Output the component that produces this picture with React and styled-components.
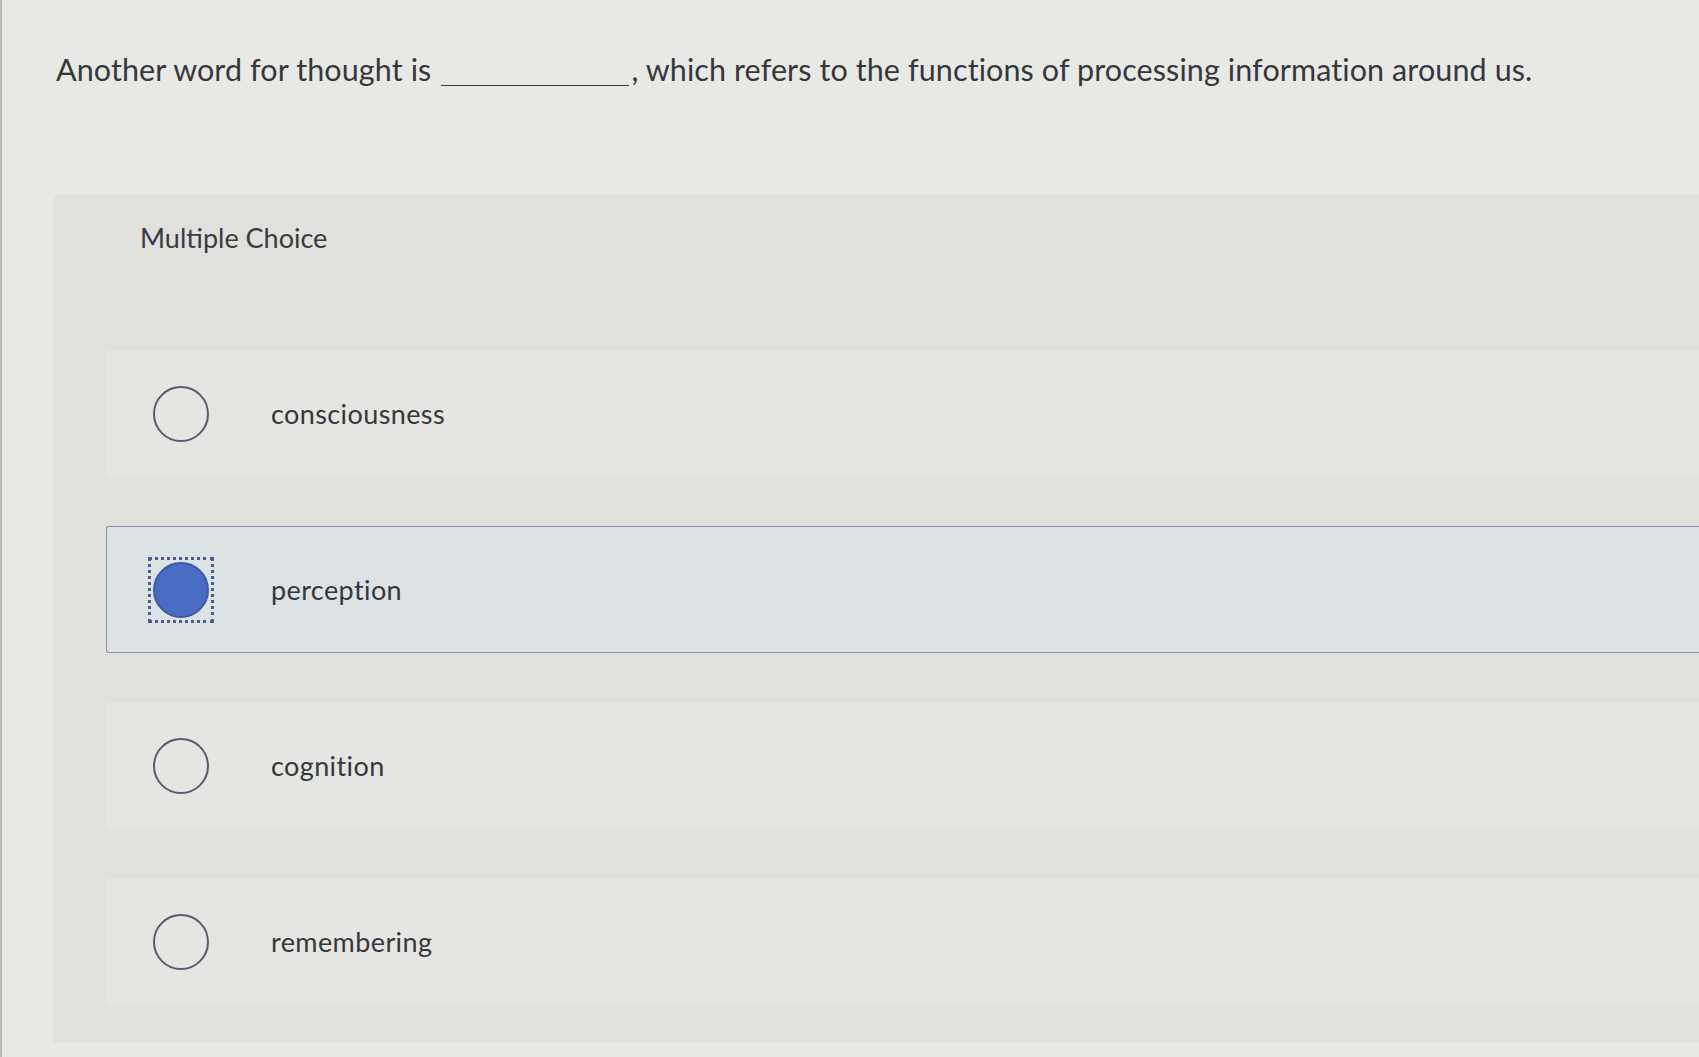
import React from 'react';
import styled, { createGlobalStyle } from 'styled-components';

const GlobalStyle = createGlobalStyle`
  html, body {
    margin: 0;
    padding: 0;
    background: #e8e8e5;
    overflow: hidden;
  }
  body {
    font-family: Lato, "Open Sans", "Liberation Sans", sans-serif;
    color: #36373c;
  }
`;

const Page = styled.div`
  min-height: 1057px;
  padding: 48px 0 0 52px;
  box-sizing: border-box;
  border-left: 2px solid #b9b9b6;
`;

const Question = styled.p`
  margin: 0 0 0 2px;
  font-size: 30.5px;
  line-height: 42px;
  letter-spacing: 0.1px;
  color: #36373c;
`;

const Blank = styled.span`
  display: inline-block;
  width: 188px;
  margin: 0 2px 0 10px;
  border-bottom: 1.5px solid #3a3b40;
  vertical-align: -5px;
`;

const Panel = styled.section`
  margin: 104px -40px 0 0;
  padding: 26px 0 38px 52px;
  background: #e0e0dd;
`;

const PanelTitle = styled.h2`
  margin: 0 0 94px 34px;
  font-size: 27px;
  font-weight: 400;
  line-height: 36px;
  color: #3a3b40;
`;

const Options = styled.div`
  display: flex;
  flex-direction: column;
  gap: 49px;
`;

const Option = styled.label`
  display: flex;
  align-items: center;
  gap: 57px;
  height: 127px;
  padding-left: 41px;
  box-sizing: border-box;
  background: ${(p) => (p.selected ? '#dde2e5' : '#e5e5e2')};
  border: 1.5px solid ${(p) => (p.selected ? '#8891b3' : 'transparent')};
  border-right: none;
  border-radius: 3px 0 0 3px;
  cursor: pointer;
`;

const Focus = styled.span`
  flex: none;
  display: flex;
  padding: 2px;
  border: 3px dotted ${(p) => (p.active ? '#4c5a96' : 'transparent')};
`;

const Radio = styled.span`
  width: 56px;
  height: 56px;
  border-radius: 50%;
  box-sizing: border-box;
  border: 2px solid ${(p) => (p.checked ? '#3d5aa6' : '#575b72')};
  background: ${(p) => (p.checked ? '#4a6bc2' : 'transparent')};
`;

const OptionText = styled.span`
  font-size: 27px;
  letter-spacing: 0.4px;
  color: #36373c;
`;

const choices = ['consciousness', 'perception', 'cognition', 'remembering'];

export default function App() {
  return (
    <>
      <GlobalStyle />
      <Page>
        <Question>
          Another word for thought is<Blank />, which refers to the functions of
          processing information around us.
        </Question>
        <Panel>
          <PanelTitle>Multiple Choice</PanelTitle>
          <Options>
            {choices.map((c) => (
              <Option key={c} selected={c === 'perception'}>
                <Focus active={c === 'perception'}>
                  <Radio checked={c === 'perception'} />
                </Focus>
                <OptionText>{c}</OptionText>
              </Option>
            ))}
          </Options>
        </Panel>
      </Page>
    </>
  );
}
